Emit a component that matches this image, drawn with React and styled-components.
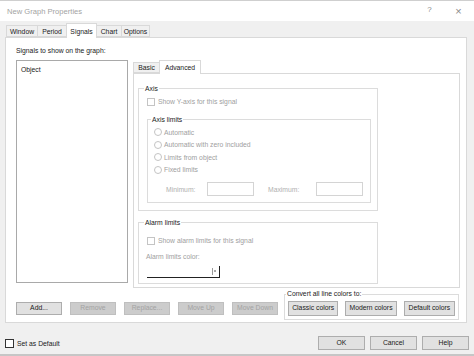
import styled, { createGlobalStyle } from "styled-components";

const GlobalStyle = createGlobalStyle`
  html, body {
    margin: 0;
    padding: 0;
  }
  body {
    width: 474px;
    height: 356px;
    overflow: hidden;
    background: #f0f0f0;
    font-family: "Liberation Sans", Arial, sans-serif;
    font-size: 6.8px;
    color: #1a1a1a;
  }
  * {
    box-sizing: border-box;
  }
`;

const Window = styled.div`
  width: 474px;
  height: 356px;
  display: flex;
  flex-direction: column;
  background: #f0f0f0;
  border-bottom: 2px solid #c6c6c6;
`;

const TitleBar = styled.div`
  height: 21px;
  flex-shrink: 0;
  display: flex;
  align-items: center;
  padding-left: 7px;
  background: #fff;
  border-top: 1px solid #cfcfcf;
`;

const Title = styled.span`
  font-size: 7.6px;
  color: #a3a3a3;
`;

const Controls = styled.div`
  margin-left: auto;
  display: flex;
  padding-right: 1px;
`;

const Control = styled.span`
  width: 29px;
  text-align: center;
  color: #8a8a8a;
  font-size: ${(p) => p.$size || 8}px;
`;

const TabStrip = styled.div`
  height: 16px;
  flex-shrink: 0;
  display: flex;
  align-items: flex-end;
  padding-left: 7px;
`;

const Tab = styled.div`
  width: ${(p) => p.$w}px;
  height: ${(p) => (p.$active ? 15 : 12)}px;
  margin-bottom: ${(p) => (p.$active ? -1 : 0)}px;
  display: flex;
  align-items: center;
  justify-content: center;
  background: ${(p) => (p.$active ? "#fff" : "#f0f0f0")};
  border: 1px solid #d9d9d9;
  border-bottom: ${(p) => (p.$active ? "none" : "1px solid #d9d9d9")};
  margin-left: -1px;
  position: relative;
  z-index: ${(p) => (p.$active ? 2 : 1)};
  color: #1a1a1a;
`;

const Panel = styled.div`
  margin-left: 5px;
  width: 462px;
  height: 286px;
  flex-shrink: 0;
  background: #fff;
  border: 1px solid #d9d9d9;
  padding: 9px 0 0 10px;
  display: flex;
  flex-direction: column;
`;

const TopRow = styled.div`
  display: flex;
  gap: 5px;
  height: 241px;
`;

const LeftCol = styled.div`
  width: 112px;
  display: flex;
  flex-direction: column;
`;

const Label = styled.div`
  height: ${(p) => p.$h || 8}px;
  line-height: 8px;
  margin-top: ${(p) => p.$mt || 0}px;
  margin-left: ${(p) => p.$ml || 0}px;
  color: ${(p) => (p.$dim ? "#a0a0a0" : "#1a1a1a")};
  white-space: nowrap;
`;

const ListBox = styled.div`
  margin-top: 5px;
  height: 223px;
  border: 1px solid #a9a9a9;
  padding: 5px 4px;
  line-height: 8px;
`;

const RightCol = styled.div`
  width: 327px;
  margin-top: 13px;
  display: flex;
  flex-direction: column;
`;

const SubTabs = styled.div`
  height: 13px;
  display: flex;
  align-items: flex-end;
`;

const SubTab = styled(Tab)`
  height: ${(p) => (p.$active ? 14 : 11)}px;
  margin-left: ${(p) => (p.$first ? 0 : -1)}px;
`;

const InnerPanel = styled.div`
  height: 215px;
  border: 1px solid #d9d9d9;
  padding: 10px 81px 4px 4px;
`;

const Group = styled.fieldset`
  margin: ${(p) => p.$mt || 0}px 0 0;
  padding: ${(p) => p.$pad};
  border: 1px solid #dcdcdc;
  min-width: 0;
`;

const Legend = styled.legend`
  padding: 0 1px;
  margin-left: -3px;
  line-height: 9px;
  color: #1a1a1a;
`;

const CheckRow = styled.label`
  display: flex;
  align-items: center;
  height: ${(p) => p.$h || 9}px;
  gap: 3px;
  color: ${(p) => (p.$dim ? "#a0a0a0" : "#1a1a1a")};
  white-space: nowrap;
`;

const Box = styled.span`
  width: ${(p) => p.$s || 8}px;
  height: ${(p) => p.$s || 8}px;
  flex-shrink: 0;
  border: 1px solid ${(p) => (p.$dim ? "#c4c4c4" : "#333")};
  background: #fff;
`;

const Radio = styled.span`
  width: 8px;
  height: 8px;
  flex-shrink: 0;
  border: 1px solid #c4c4c4;
  border-radius: 50%;
  background: #fff;
`;

const RadioRow = styled(CheckRow)`
  height: 12.5px;
  gap: 2px;
`;

const LimitsRow = styled.div`
  margin-top: 6px;
  height: 14px;
  display: flex;
  align-items: center;
  padding-left: 12px;
`;

const FieldLabel = styled.span`
  width: ${(p) => p.$w}px;
  color: #b0b0b0;
`;

const NumBox = styled.span`
  width: 47px;
  height: 14px;
  border: 1px solid #d4d4d4;
  background: #fff;
  margin-right: ${(p) => p.$mr || 0}px;
`;

const ColorCombo = styled.div`
  margin-top: 5px;
  width: 73px;
  height: 12px;
  border-right: 1px solid #222;
  border-bottom: 1px solid #222;
  display: flex;
  justify-content: flex-end;
  align-items: center;
  padding-right: 3px;
`;

const BottomRow = styled.div`
  display: flex;
  align-items: flex-start;
  margin-top: 1px;
`;

const ButtonRow = styled.div`
  display: flex;
  gap: ${(p) => p.$gap || 8}px;
  margin-top: ${(p) => p.$mt || 0}px;
  margin-left: ${(p) => (p.$push ? "auto" : "0")};
`;

const Button = styled.button`
  width: ${(p) => p.$w || 46}px;
  height: ${(p) => p.$h || 13}px;
  padding: 0;
  font-family: inherit;
  font-size: 6.8px;
  line-height: 1;
  color: ${(p) => (p.disabled ? "#a3a3a3" : "#1a1a1a")};
  background: ${(p) => (p.disabled ? "#cccccc" : "#e1e1e1")};
  border: 1px solid ${(p) => (p.disabled ? "#bfbfbf" : "#adadad")};
  border-radius: 0;
`;

const ConvertGroup = styled(Group)`
  width: 175px;
  margin-left: 6px;
  legend {
    line-height: 10px;
    margin-left: -2px;
  }
`;

const Footer = styled.div`
  flex: 1;
  display: flex;
  align-items: center;
  padding: 9px 5px 0 5px;
`;

function Check({ children, dim, size }) {
  return (
    <CheckRow $dim={dim}>
      <Box $dim={dim} $s={size} />
      {children}
    </CheckRow>
  );
}

export default function App() {
  const outerTabs = [
    ["Window", 32],
    ["Period", 30],
    ["Signals", 31],
    ["Chart", 26],
    ["Options", 29],
  ];
  const radios = [
    "Automatic",
    "Automatic with zero included",
    "Limits from object",
    "Fixed limits",
  ];

  return (
    <>
      <GlobalStyle />
      <Window>
        <TitleBar>
          <Title>New Graph Properties</Title>
          <Controls>
            <Control $size={8}>?</Control>
            <Control $size={11}>×</Control>
          </Controls>
        </TitleBar>

        <TabStrip>
          {outerTabs.map(([name, w]) => (
            <Tab key={name} $w={w} $active={name === "Signals"}>
              {name}
            </Tab>
          ))}
        </TabStrip>

        <Panel>
          <TopRow>
            <LeftCol>
              <Label>Signals to show on the graph:</Label>
              <ListBox>Object</ListBox>
            </LeftCol>

            <RightCol>
              <SubTabs>
                <SubTab $w={27} $first>
                  Basic
                </SubTab>
                <SubTab $w={42} $active>
                  Advanced
                </SubTab>
              </SubTabs>
              <InnerPanel>
                <Group $pad="4px 6px 7px 8px">
                  <Legend>Axis</Legend>
                  <Check dim>Show Y-axis for this signal</Check>
                  <Group $mt={9} $pad="2px 6px 6px 6px">
                    <Legend>Axis limits</Legend>
                    {radios.map((r) => (
                      <RadioRow key={r} $dim>
                        <Radio />
                        {r}
                      </RadioRow>
                    ))}
                    <LimitsRow>
                      <FieldLabel $w={41}>Minimum:</FieldLabel>
                      <NumBox $mr={14} />
                      <FieldLabel $w={48}>Maximum:</FieldLabel>
                      <NumBox />
                    </LimitsRow>
                  </Group>
                </Group>

                <Group $mt={7} $pad="9px 6px 5px 8px">
                  <Legend>Alarm limits</Legend>
                  <Check dim>Show alarm limits for this signal</Check>
                  <Label $dim $mt={8} $ml={-1}>
                    Alarm limits color:
                  </Label>
                  <ColorCombo>
                    <svg width="4" height="7" viewBox="0 0 4 7">
                      <line x1="0.5" y1="0" x2="0.5" y2="7" stroke="#9a9a9a" />
                      <path d="M2 3h2" stroke="#555" />
                    </svg>
                  </ColorCombo>
                </Group>
              </InnerPanel>
            </RightCol>
          </TopRow>

          <BottomRow>
            <ButtonRow $mt={13}>
              <Button>Add...</Button>
              <Button disabled>Remove</Button>
              <Button disabled>Replace...</Button>
              <Button disabled>Move Up</Button>
              <Button disabled>Move Down</Button>
            </ButtonRow>
            <ConvertGroup $pad="2px 3px 3px 3px">
              <Legend>Convert all line colors to:</Legend>
              <ButtonRow $gap={7}>
                <Button $w={51} $h={15}>Classic colors</Button>
                <Button $w={52} $h={15}>Modern colors</Button>
                <Button $w={52} $h={15}>Default colors</Button>
              </ButtonRow>
            </ConvertGroup>
          </BottomRow>
        </Panel>

        <Footer>
          <Check size={9}>Set as Default</Check>
          <ButtonRow $push $gap={5}>
            <Button $w={47} $h={14}>OK</Button>
            <Button $w={47} $h={14}>Cancel</Button>
            <Button $w={47} $h={14}>Help</Button>
          </ButtonRow>
        </Footer>
      </Window>
    </>
  );
}
